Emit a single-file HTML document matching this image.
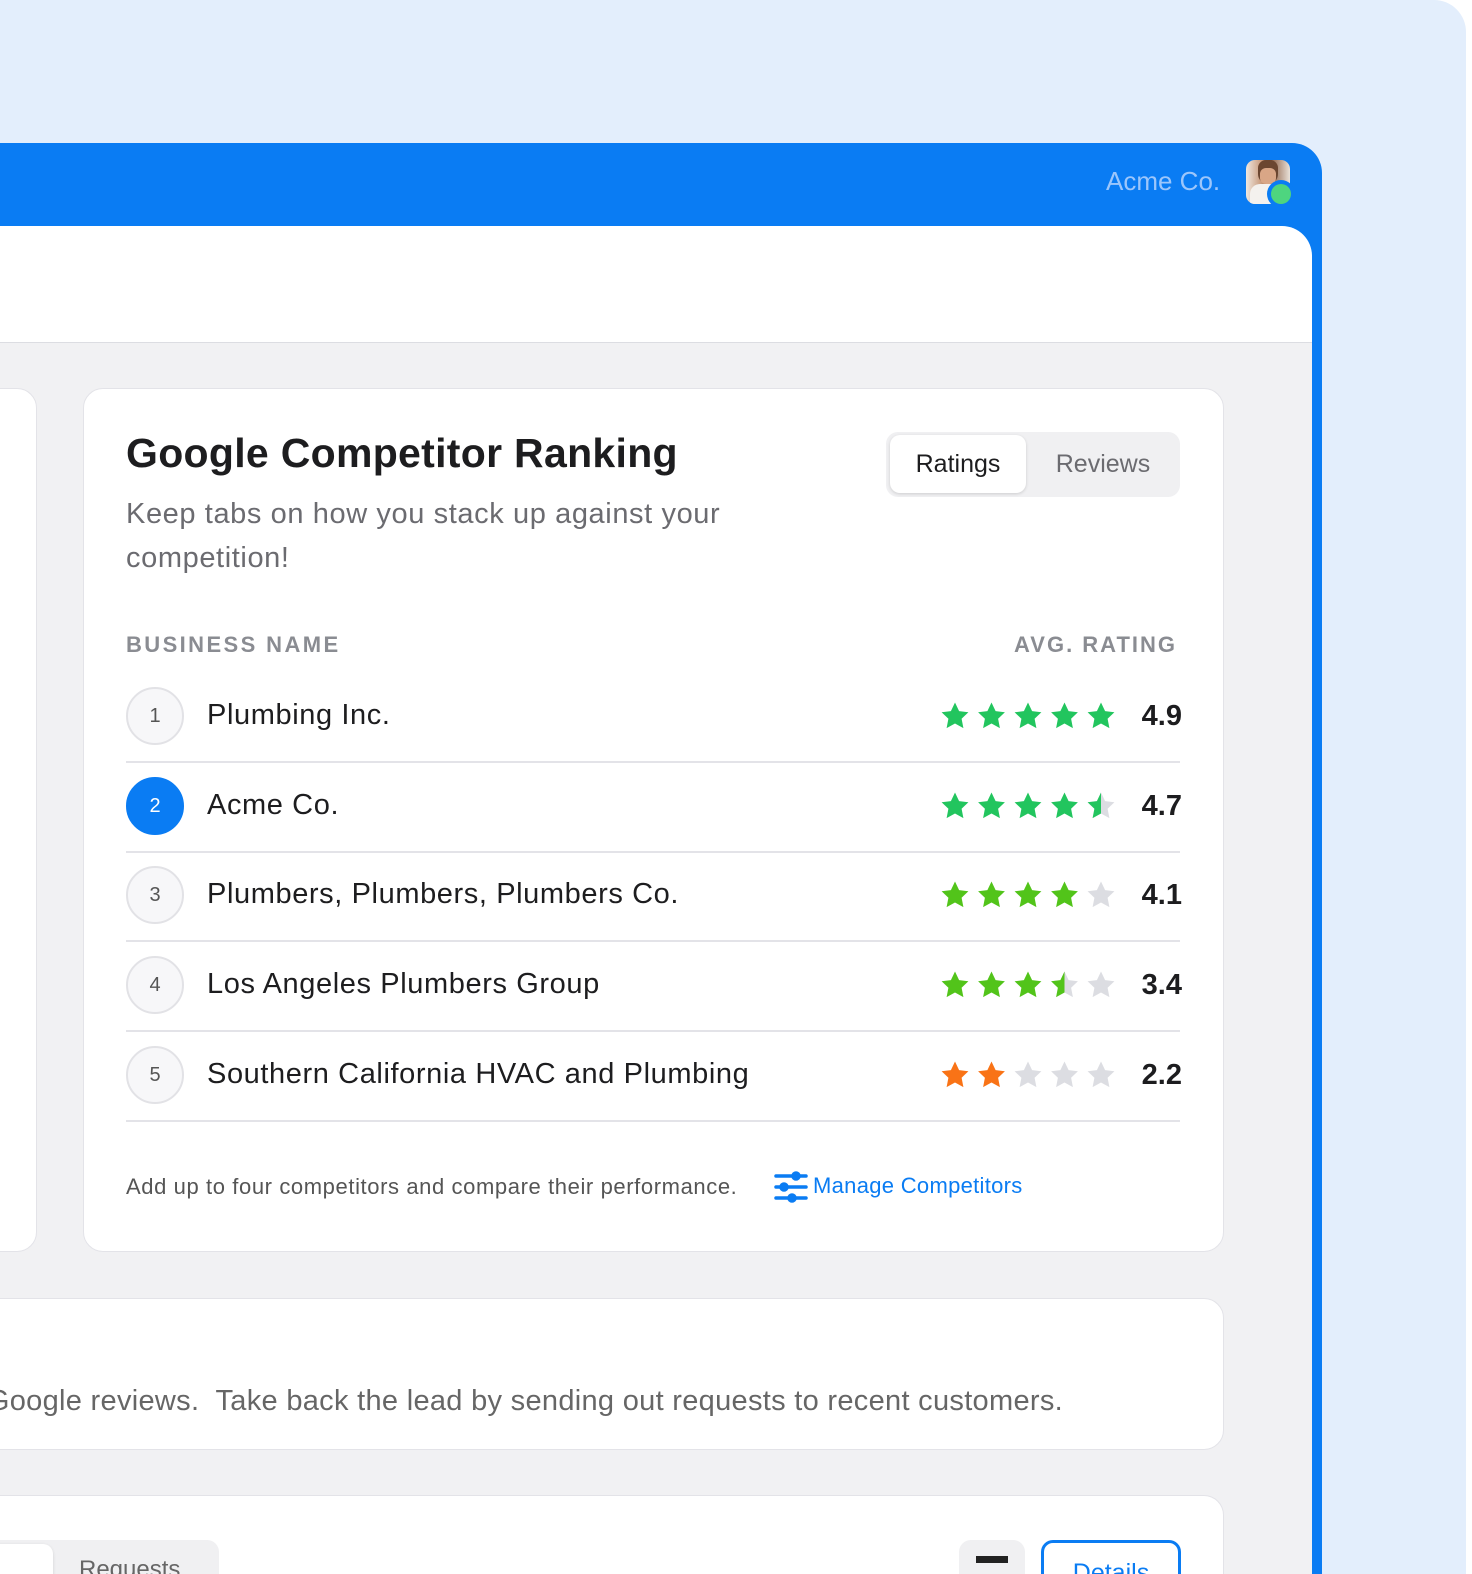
<!DOCTYPE html>
<html><head><meta charset="utf-8"><style>
*{margin:0;padding:0;box-sizing:border-box}
html,body{width:1472px;height:1574px;overflow:hidden;background:#fff}
body{font-family:"Liberation Sans",sans-serif;position:relative}
.bg{position:absolute;left:0;top:0;width:1466px;height:1574px;background:#e3eefc;border-top-right-radius:32px}
.frame{position:absolute;left:0;top:143px;width:1322px;height:1431px;background:#0a7cf3;border-top-right-radius:30px}
.white{position:absolute;left:0;top:226px;width:1312px;height:117px;background:#fff;border-top-right-radius:30px;border-bottom:1px solid #dcdde2}
.gray{position:absolute;left:0;top:343px;width:1312px;height:1231px;background:#f1f1f3;overflow:hidden}
.card{position:absolute;background:#fff;border:1px solid #e3e3e8;border-radius:20px}
.abs{position:absolute;white-space:nowrap}
.row{position:absolute;left:126px;width:1054px;height:76px;border-bottom:2px solid #e3e3e8}
.num{position:absolute;left:0;top:0;width:58px;height:58px;border-radius:50%;border:2px solid #e2e2e6;background:#f7f7f9;color:#555;font-size:20px;text-align:center;line-height:54px}
.name{position:absolute;left:81px;top:12px;font-size:29px;letter-spacing:0.6px;color:#1d1d1f}
.stars{position:absolute;left:814px;top:14px}
.val{position:absolute;right:-2px;top:13px;font-size:29px;font-weight:bold;color:#1d1d1f}
</style></head><body>
<svg width="0" height="0" style="position:absolute"><defs>
<path id="st" d="M15 1.5l4.1 8.6 9.3 1.2-6.8 6.5 1.8 9.3L15 22.5l-8.4 4.6 1.8-9.3-6.8-6.5 9.3-1.2z" stroke-linejoin="round"/>
<clipPath id="half"><rect x="0" y="0" width="15" height="30"/></clipPath>
</defs></svg>
<div class="bg"></div>
<div class="frame"></div>
<div class="abs" style="left:1106px;top:166px;font-size:26px;color:#9cc6fb">Acme Co.</div>
<div class="abs" style="left:1246px;top:160px;width:44px;height:44px;border-radius:9px;background:linear-gradient(90deg,#efe8e0 0%,#c99a7c 35%,#8a5a3e 55%,#e9e2da 100%);overflow:hidden">
<div style="position:absolute;left:12px;top:0;width:20px;height:24px;background:#6b4630;border-radius:8px 8px 10px 10px"></div>
<div style="position:absolute;left:14px;top:8px;width:16px;height:16px;background:#d9a686;border-radius:6px"></div>
<div style="position:absolute;left:4px;top:24px;width:36px;height:20px;background:#f4f1ee;border-radius:10px 10px 0 0"></div>
</div>
<div class="abs" style="left:1267px;top:180px;width:28px;height:28px;border-radius:50%;background:#0a7cf3"></div>
<div class="abs" style="left:1271px;top:184px;width:20px;height:20px;border-radius:50%;background:#4ed57f"></div>
<div class="white"></div>
<div class="gray"></div>
<div class="card" style="left:-30px;top:388px;width:67px;height:864px"></div>
<div class="card" style="left:83px;top:388px;width:1141px;height:864px"></div>
<div class="abs" style="left:126px;top:430px;font-size:41px;font-weight:bold;letter-spacing:0.3px;color:#1d1d1f">Google Competitor Ranking</div>
<div class="abs" style="left:126px;top:492px;font-size:29px;letter-spacing:0.6px;line-height:44px;color:#6b6b70;white-space:normal;width:660px">Keep tabs on how you stack up against your competition!</div>
<div class="abs" style="left:886px;top:432px;width:294px;height:65px;background:#f0f0f2;border-radius:12px"></div>
<div class="abs" style="left:890px;top:435px;width:136px;height:58px;background:#fff;border-radius:10px;box-shadow:0 1px 3px rgba(0,0,0,.15);font-size:25px;text-align:center;line-height:58px;color:#1d1d1f">Ratings</div>
<div class="abs" style="left:1030px;top:435px;width:146px;height:58px;font-size:25px;text-align:center;line-height:58px;color:#6b6b70">Reviews</div>
<div class="abs" style="left:126px;top:632px;font-size:22px;font-weight:bold;letter-spacing:2.4px;color:#8a8c92">BUSINESS NAME</div>
<div class="abs" style="right:295px;top:632px;font-size:22px;font-weight:bold;letter-spacing:2px;color:#8a8c92">AVG. RATING</div>

<div class="row" style="top:687px"><div class="num">1</div><div class="name">Plumbing Inc.</div>
<svg class="stars" width="180" height="32" fill="#22c55e"><use href="#st" x="0"/><use href="#st" x="36.5"/><use href="#st" x="73"/><use href="#st" x="109.5"/><use href="#st" x="146"/></svg><div class="val">4.9</div></div>

<div class="row" style="top:777px"><div class="num" style="background:#0a7cf3;border-color:#0a7cf3;color:#fff">2</div><div class="name">Acme Co.</div>
<svg class="stars" width="180" height="32" fill="#22c55e"><use href="#st" x="0"/><use href="#st" x="36.5"/><use href="#st" x="73"/><use href="#st" x="109.5"/><g transform="translate(146 0)"><use href="#st" fill="#dcdde2"/><use href="#st" clip-path="url(#half)"/></g></svg><div class="val">4.7</div></div>

<div class="row" style="top:866px"><div class="num">3</div><div class="name">Plumbers, Plumbers, Plumbers Co.</div>
<svg class="stars" width="180" height="32" fill="#52c41a"><use href="#st" x="0"/><use href="#st" x="36.5"/><use href="#st" x="73"/><use href="#st" x="109.5"/><use href="#st" x="146" fill="#dcdde2"/></svg><div class="val">4.1</div></div>

<div class="row" style="top:956px"><div class="num">4</div><div class="name">Los Angeles Plumbers Group</div>
<svg class="stars" width="180" height="32" fill="#52c41a"><use href="#st" x="0"/><use href="#st" x="36.5"/><use href="#st" x="73"/><g transform="translate(109.5 0)"><use href="#st" fill="#dcdde2"/><use href="#st" clip-path="url(#half)"/></g><use href="#st" x="146" fill="#dcdde2"/></svg><div class="val">3.4</div></div>

<div class="row" style="top:1046px"><div class="num">5</div><div class="name">Southern California HVAC and Plumbing</div>
<svg class="stars" width="180" height="32" fill="#dcdde2"><use href="#st" x="0" fill="#f97316"/><use href="#st" x="36.5" fill="#f97316"/><use href="#st" x="73"/><use href="#st" x="109.5"/><use href="#st" x="146"/></svg><div class="val">2.2</div></div>

<div class="abs" style="left:126px;top:1174px;font-size:22px;letter-spacing:0.6px;color:#555">Add up to four competitors and compare their performance.</div>
<svg class="abs" style="left:774px;top:1171px" width="34" height="32" fill="none" stroke="#0a7cf3" stroke-width="3.5" stroke-linecap="round"><path d="M2 5h30M2 16h30M2 27h30"/><circle cx="22" cy="5" r="3" fill="#0a7cf3"/><circle cx="10" cy="16" r="3" fill="#0a7cf3"/><circle cx="18" cy="27" r="3" fill="#0a7cf3"/></svg>
<div class="abs" style="left:813px;top:1173px;font-size:22px;letter-spacing:0.3px;color:#0a7cf3">Manage Competitors</div>

<div class="card" style="left:-30px;top:1298px;width:1254px;height:152px;overflow:hidden">
<div class="abs" style="right:160px;top:86px;font-size:29px;letter-spacing:0.3px;color:#666">Google reviews.&nbsp; Take back the lead by sending out requests to recent customers.</div>
</div>
<div class="card" style="left:-30px;top:1495px;width:1254px;height:79px;overflow:hidden;border-bottom:none;border-radius:20px 20px 0 0">
<div class="abs" style="left:0;top:44px;width:248px;height:70px;background:#f0f0f2;border-radius:12px"></div>
<div class="abs" style="left:0;top:48px;width:82px;height:70px;background:#fff;border-radius:10px;box-shadow:0 1px 3px rgba(0,0,0,.12)"></div>
<div class="abs" style="left:108px;top:60px;font-size:24px;color:#666">Requests</div>
<div class="abs" style="left:988px;top:44px;width:66px;height:70px;background:#f0f0f2;border-radius:12px"></div>
<div class="abs" style="left:1005px;top:60px;width:32px;height:30px;border-top:7px solid #222;border-bottom:4px solid #222"></div>
<div class="abs" style="left:1070px;top:44px;width:140px;height:70px;border:3px solid #0a7cf3;border-radius:12px;color:#0a7cf3;font-size:25px;text-align:center;padding-top:16px">Details</div>
</div>
</body></html>
